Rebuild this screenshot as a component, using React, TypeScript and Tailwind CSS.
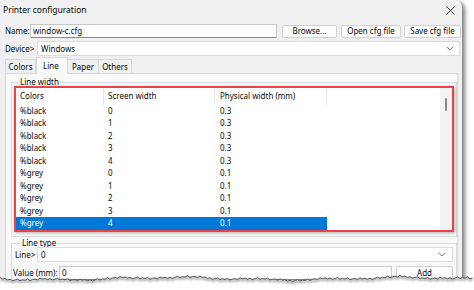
import React from "react";

const rows: [string, string, string][] = [
  ["%black", "0", "0.3"],
  ["%black", "1", "0.3"],
  ["%black", "2", "0.3"],
  ["%black", "3", "0.3"],
  ["%black", "4", "0.3"],
  ["%grey", "0", "0.1"],
  ["%grey", "1", "0.1"],
  ["%grey", "2", "0.1"],
  ["%grey", "3", "0.1"],
  ["%grey", "4", "0.1"],
];

function Chevron() {
  return (
    <svg width="8" height="5" viewBox="0 0 8 5" className="shrink-0">
      <path d="M0.5 0.8 L4 4 L7.5 0.8" fill="none" stroke="#6a6a6a" strokeWidth="0.9" />
    </svg>
  );
}

function TornEdge() {
  const pts: string[] = [];
  const seq = [0, 1.4, 0.6, 2.1, 1, 2.6, 1.6, 0.4, 2.2, 1.1, 1.8, 0.3, 2.4, 1.3, 0.8, 2];
  let i = 0;
  for (let x = 0; x <= 474; x += 2.5) {
    const base = 277.5 + 1.2 * Math.sin(x / 37) + 0.8 * Math.sin(x / 11);
    pts.push(`${x.toFixed(1)},${(base + seq[i % seq.length] * 0.8).toFixed(1)}`);
    i++;
  }
  const line = pts.join(" L");
  return (
    <svg className="absolute left-0 top-0 pointer-events-none" width="474" height="290" viewBox="0 0 474 290">
      <defs>
        <filter id="blur" x="-10%" y="-50%" width="120%" height="200%">
          <feGaussianBlur stdDeviation="1.2" />
        </filter>
      </defs>
      <path d={`M${line} L474,290 L0,290 Z`} fill="#ffffff" />
      <path d={`M${line}`} transform="translate(0,1.5)" fill="none" stroke="#000" strokeOpacity="0.35" strokeWidth="2" filter="url(#blur)" />
      <path d={`M${line}`} fill="none" stroke="#555" strokeWidth="1" />
    </svg>
  );
}

export default function App() {
  return (
    <div className="relative w-[474px] h-[290px] bg-white overflow-hidden font-['Noto_Sans',sans-serif] text-[8px] text-[#0a0a0a] leading-none">
      <div className="w-[462px] h-[288px] bg-[#f0f0f0] rounded-tr-[7px] shadow-[3px_2px_4px_rgba(0,0,0,0.5)] flex flex-col">
        {/* Title bar */}
        <div className="h-[21px] flex items-center justify-between pl-[3px] pr-[7px]">
          <span className="text-[8.5px]">Printer configuration</span>
          <svg width="9" height="9" viewBox="0 0 9 9">
            <path d="M0.5 0.5 L8.5 8.5 M8.5 0.5 L0.5 8.5" stroke="#222" strokeWidth="0.9" />
          </svg>
        </div>

        {/* Name row */}
        <div className="mt-[3px] h-[14px] flex items-center">
          <span className="w-[30px] pl-[5px]">Name:</span>
          <div className="w-[247px] h-[14px] bg-white border border-[#c8c8c8] border-b-[#8a8a8a] flex items-center pl-[2px]">
            window-c.cfg
          </div>
          <button className="ml-[5px] w-[55px] h-[13px] bg-[#fdfdfd] border border-[#d0d0d0] rounded-[2px] flex items-center justify-center">
            Browse...
          </button>
          <button className="ml-[4px] w-[60px] h-[13px] bg-[#fdfdfd] border border-[#d0d0d0] rounded-[2px] flex items-center justify-center">
            Open cfg file
          </button>
          <button className="ml-[3px] w-[57px] h-[13px] bg-[#fdfdfd] border border-[#d0d0d0] rounded-[2px] flex items-center justify-center">
            Save cfg file
          </button>
        </div>

        {/* Device row */}
        <div className="mt-[3px] h-[15px] flex items-center">
          <span className="w-[37px] pl-[5px]">Device&gt;</span>
          <div className="w-[423px] h-[15px] bg-white border border-[#dcdcdc] flex items-center justify-between pl-[3px] pr-[5px]">
            <span>Windows</span>
            <Chevron />
          </div>
        </div>

        {/* Tabs */}
        <div className="mt-[1px] h-[16px] flex items-end pl-[5px] relative z-10">
          <div className="w-[31px] h-[14px] border border-[#d9d9d9] border-b-0 flex items-center justify-center">Colors</div>
          <div className="w-[32px] h-[17px] border border-[#d9d9d9] border-b-0 bg-[#f9f9f9] flex items-center pl-[6px] -mb-[1px]">Line</div>
          <div className="w-[31px] h-[14px] border border-[#d9d9d9] border-b-0 border-l-0 flex items-center justify-center">Paper</div>
          <div className="w-[33px] h-[14px] border border-[#d9d9d9] border-b-0 border-l-0 flex items-center justify-center">Others</div>
        </div>

        {/* Panel */}
        <div className="ml-[5px] w-[453px] flex-1 border border-[#d9d9d9] bg-[#f9f9f9] flex flex-col">
          <fieldset className="mt-[4px] ml-[5px] w-[445px] h-[159px] border border-[#dcdcdc] px-[2px] pb-[2px]">
            <legend className="ml-[5px] px-[1px]">Line width</legend>
            <div className="w-[440px] h-[146px] border-2 border-[#e8434a] shadow-[1px_1px_3px_rgba(0,0,0,0.3)] bg-white flex">
              <div className="w-[424px] flex flex-col">
                <div className="h-[16.5px] flex items-center">
                  <div className="w-[88px] h-full flex items-center pl-[4px] border-r border-[#e5e5e5]">Colors</div>
                  <div className="w-[111px] h-full flex items-center pl-[4px] border-r border-[#e5e5e5]">Screen width</div>
                  <div className="w-[112px] h-full flex items-center pl-[5px] border-r border-[#e5e5e5]">Physical width (mm)</div>
                </div>
                {rows.map((r, idx) => {
                  const sel = idx === rows.length - 1;
                  return (
                    <div key={idx} className="h-[12.5px] flex">
                      <div className={`w-[311px] flex items-center ${sel ? "bg-[#0078d7] text-white" : ""}`}>
                        <div className="w-[88px] pl-[4px]">{r[0]}</div>
                        <div className="w-[111px] pl-[4px]">{r[1]}</div>
                        <div className="w-[112px] pl-[5px]">{r[2]}</div>
                      </div>
                    </div>
                  );
                })}
              </div>
              <div className="w-[12px] bg-[#f3f3f3] flex justify-center pt-[10px]">
                <div className="w-[2px] h-[13px] bg-[#8a8a8a] rounded-full" />
              </div>
            </div>
          </fieldset>

          <fieldset className="mt-[2px] ml-[5px] w-[446px] border border-[#dcdcdc] px-[3px]">
            <legend className="ml-[6px] px-[1px]">Line type</legend>
            <div className="h-[15px] flex items-center">
              <span className="w-[22px]">Line&gt;</span>
              <div className="flex-1 h-[15px] bg-white border border-[#dcdcdc] flex items-center justify-between pl-[3px] pr-[6px]">
                <span>0</span>
                <Chevron />
              </div>
            </div>
            <div className="mt-[3px] h-[15px] flex items-center -ml-[2px]">
              <span className="w-[46px]">Value (mm):</span>
              <div className="w-[333px] h-[14px] bg-white border border-[#c8c8c8] border-b-[#8a8a8a] flex items-center pl-[2px]">0</div>
              <button className="ml-[4px] w-[57px] h-[14px] bg-[#fdfdfd] border border-[#d0d0d0] rounded-[2px] flex items-center justify-center">Add</button>
            </div>
          </fieldset>
        </div>
      </div>
      <TornEdge />
    </div>
  );
}
